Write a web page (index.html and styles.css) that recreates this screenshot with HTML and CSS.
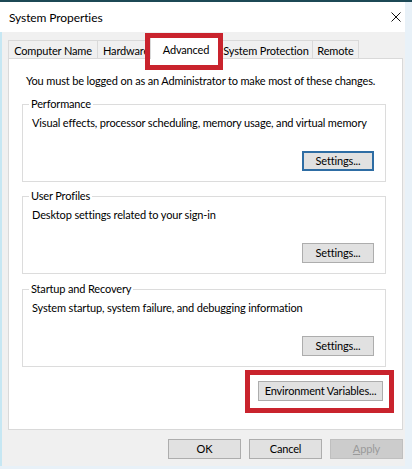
FILE: index.html
```html
<!DOCTYPE html>
<html lang="en">
<head>
<meta charset="utf-8">
<title>System Properties</title>
<link rel="stylesheet" href="styles.css">
</head>
<body class="desktop">
<div class="window">
  <div class="titlebar">
    <span class="title">System Properties</span>
    <svg class="close" width="10" height="10" viewBox="0 0 10 10"><path d="M0.5 0.5 L9.5 9.5 M9.5 0.5 L0.5 9.5" stroke="#111" stroke-width="1" fill="none"/></svg>
  </div>
  <div class="client">
    <div class="tabs">
      <div class="tab tab-cn">Computer Name</div>
      <div class="tab tab-hw">Hardware</div>
      <div class="tab tab-adv selected">Advanced<span class="mark mark-tab"></span></div>
      <div class="tab tab-sp">System Protection</div>
      <div class="tab tab-rm">Remote</div>
    </div>
    <div class="panel">
      <p class="note">You must be logged on as an Administrator to make most of these changes.</p>
      <fieldset class="group">
        <legend>Performance</legend>
        <p class="desc">Visual effects, processor scheduling, memory usage, and virtual memory</p>
        <div class="actions"><button class="btn btn-default">Settings...</button></div>
      </fieldset>
      <fieldset class="group group-2">
        <legend>User Profiles</legend>
        <p class="desc">Desktop settings related to your sign-in</p>
        <div class="actions"><button class="btn">Settings...</button></div>
      </fieldset>
      <fieldset class="group group-3">
        <legend>Startup and Recovery</legend>
        <p class="desc">System startup, system failure, and debugging information</p>
        <div class="actions"><button class="btn">Settings...</button></div>
      </fieldset>
      <div class="env-row">
        <span class="marked"><button class="btn btn-env">Environment Variables...</button><span class="mark mark-env"></span></span>
      </div>
    </div>
    <div class="footer">
      <button class="btn btn-foot">OK</button>
      <button class="btn btn-foot">Cancel</button>
      <button class="btn btn-foot btn-disabled" disabled><u>A</u>pply</button>
    </div>
  </div>
</div>
</body>
</html>
```

FILE: styles.css
```css
* { box-sizing: border-box; }

.desktop {
  margin: 0;
  height: 469px;
  overflow: hidden;
  background: #e8f1f8;
  border-top: 2px solid #1c4855;
  font-family: Lato, "Liberation Sans", sans-serif;
  font-size: 11px;
  letter-spacing: -0.15px;
  color: #000;
}

.window {
  width: 405px;
  display: flex;
  flex-direction: column;
}

.titlebar {
  height: 30px;
  background: #fff;
  display: flex;
  align-items: center;
  justify-content: space-between;
  padding: 0 4px 0 9px;
}

.title { font-size: 12px; letter-spacing: -0.1px; }

.close { display: block; }

.client {
  background: #f0f0f0;
  border-left: 2px solid #c6e7f3;
  padding: 4px 2px 0 6px;
}

.tabs {
  display: flex;
  align-items: flex-end;
  height: 22px;
}

.tab {
  height: 18px;
  padding-top: 2px;
  line-height: 16px;
  text-align: center;
  white-space: nowrap;
  background: #f0f0f0;
  border: 1px solid #d9d9d9;
  border-bottom: none;
  margin-left: -1px;
  overflow: hidden;
}

.tab-cn { width: 90px; margin-left: 0; }
.tab-hw { width: 56px; text-align: left; padding-left: 5px; }
.tab-adv { width: 72px; margin-left: -3px; }
.tab-sp { width: 94px; margin-left: -3px; }
.tab-rm { width: 47px; }

.tab.selected {
  position: relative;
  z-index: 2;
  height: 23px;
  margin-bottom: -1px;
  padding-top: 5px;
  background: #fff;
  overflow: visible;
}

.mark {
  position: absolute;
  border: 5px solid #c9232d;
  pointer-events: none;
}

.mark-tab { left: -6px; right: -2px; top: -4px; bottom: -11px; }

.panel {
  background: #fff;
  border: 1px solid #d9d9d9;
  height: 372px;
  padding: 14px 16px 0 13px;
}

.note {
  margin: 0 0 8px 4px;
  line-height: 16px;
  white-space: nowrap;
}

.group {
  margin: 0;
  border: 1px solid #dcdcdc;
  padding: 0 11px 10px 6px;
  min-inline-size: 0;
}

.group-2 { margin-top: 7px; }
.group-3 { margin-top: 8px; }

.group legend {
  padding: 0 2px;
  line-height: 14px;
}

.desc {
  margin: 4px 0 0 3px;
  line-height: 16px;
  white-space: nowrap;
}

.actions {
  display: flex;
  justify-content: flex-end;
  margin-top: 20px;
}

.btn {
  font: inherit;
  letter-spacing: inherit;
  color: #000;
  height: 20px;
  padding: 0;
  background: #e1e1e1;
  border: 1px solid #adadad;
  border-radius: 0;
  line-height: 18px;
  white-space: nowrap;
}

.actions .btn { width: 72px; }

.btn-default {
  border-color: #2e6da4;
  box-shadow: inset 0 0 0 1px #2e6da4;
}

.env-row {
  display: flex;
  justify-content: flex-end;
  margin-top: 14px;
  padding-right: 3px;
}

.marked { position: relative; display: block; }

.btn-env { width: 125px; display: block; }

.mark-env { left: -13px; right: -11px; top: -11px; bottom: -12px; }

.footer {
  display: flex;
  justify-content: flex-end;
  gap: 8px;
  padding: 9px 0 7px;
}

.btn-foot { width: 73px; }

.btn-disabled {
  background: #cccccc;
  border-color: #bfbfbf;
  color: #9a9a9a;
}
```
